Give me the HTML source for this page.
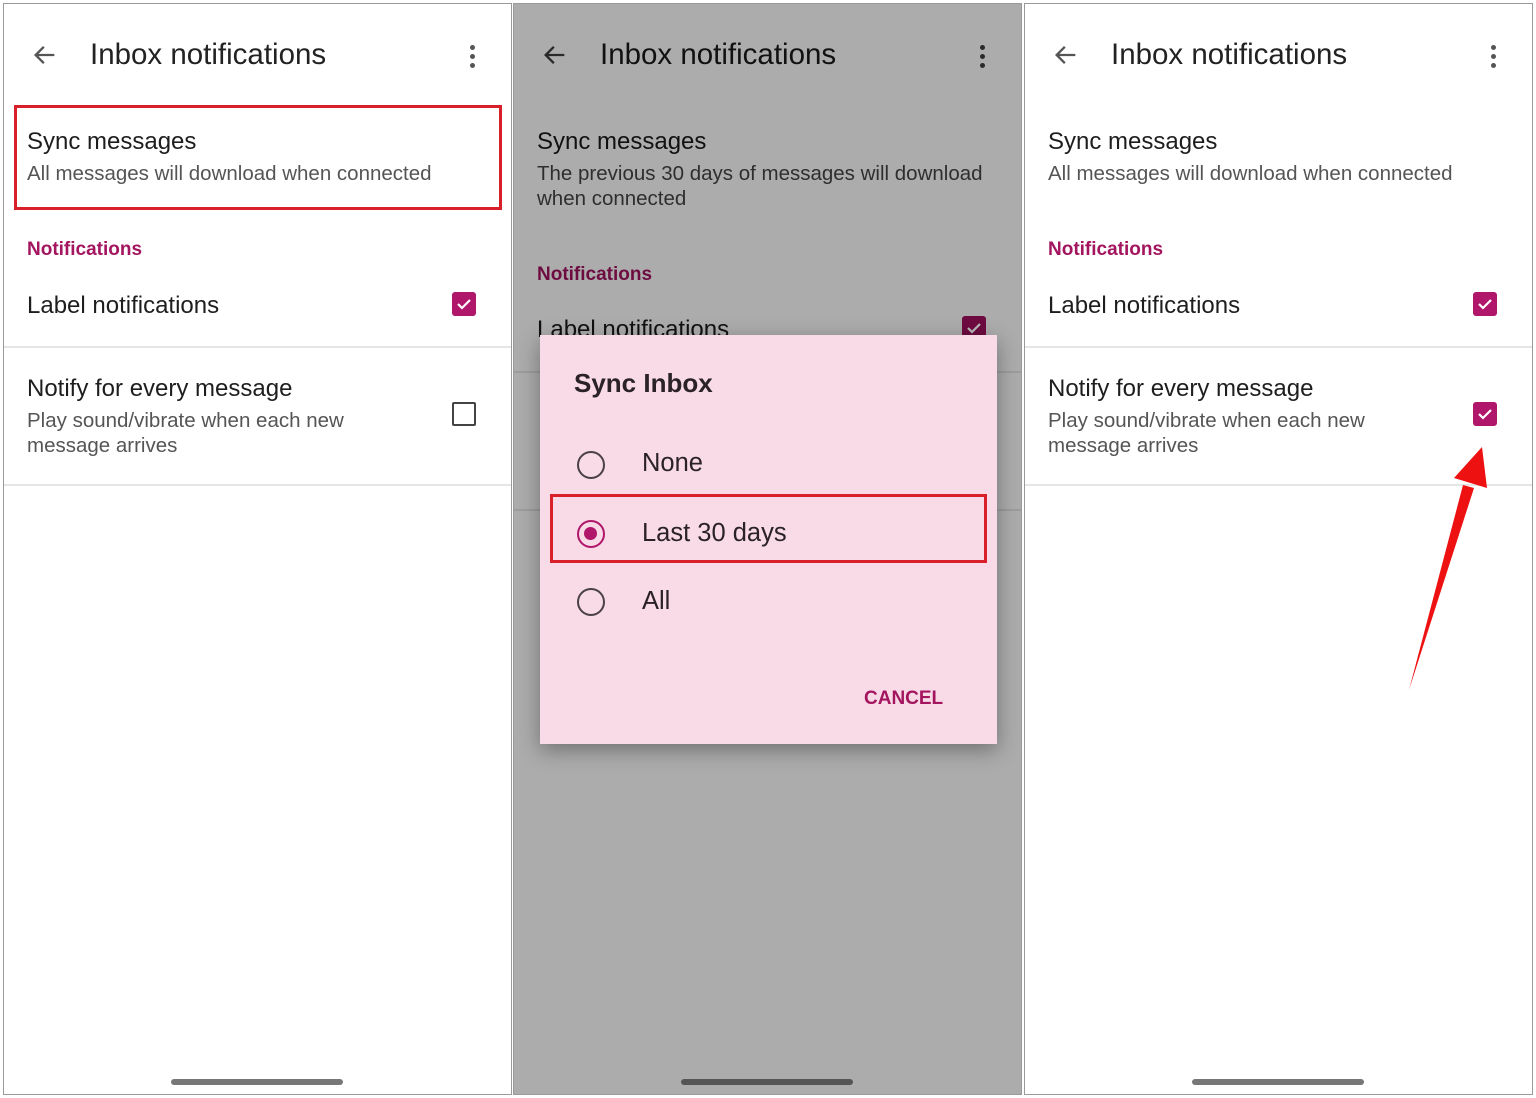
<!DOCTYPE html>
<html><head><meta charset="utf-8"><style>
*{margin:0;padding:0;box-sizing:border-box}
body{width:1536px;height:1098px;background:#fff;position:relative;overflow:hidden;font-family:"Liberation Sans",sans-serif;color:#1f1f1f}
.p{position:absolute;top:3px;height:1092px;width:509px;border:1px solid #9a9a9a;background:#fff;overflow:hidden}
.t{position:absolute;white-space:nowrap;line-height:1}
.h{font-size:29.5px;top:36px;left:86px;color:#222}
.s{font-size:24px;color:#1e1e1e}
.sub{font-size:20.5px;color:#555;line-height:25px}
.n{font-size:19px;font-weight:bold;color:#a3155f}
.div{position:absolute;left:0;right:0;height:2px;background:#e6e6e6}
.cb{position:absolute;width:24px;height:24px;border-radius:3px;background:#b0166a}
.cbo{position:absolute;width:24px;height:24px;border:2.5px solid #444;border-radius:2px}
.bar{position:absolute;top:1075px;left:167px;width:172px;height:6px;border-radius:3px;background:#777}
.dots{position:absolute;left:466px;top:41px;width:6px}
.dots i{display:block;width:5px;height:5px;border-radius:50%;background:#555;margin-bottom:4px}
</style></head><body>

<div class="p" style="left:3px">
<svg style="position:absolute;left:27px;top:37px" width="28" height="28" viewBox="0 0 24 24"><path d="M20 12H5M11 5l-7 7 7 7" stroke="#555" stroke-width="2" fill="none"/></svg>
<div class="t h">Inbox notifications</div>
<div class="dots"><i></i><i></i><i></i></div>
<div style="position:absolute;left:10px;top:101px;width:488px;height:105px;border:3px solid #d9202a"></div>
<div class="t s" style="left:23px;top:126px">Sync messages</div>
<div class="t sub" style="left:23px;top:157px">All messages will download when connected</div>
<div class="t n" style="left:23px;top:236px">Notifications</div>
<div class="t s" style="left:23px;top:290px">Label notifications</div>
<div class="cb" style="left:448px;top:288px"><svg width="24" height="24" viewBox="0 0 24 24"><path d="M6 12l4 4 8-8" stroke="#fff" stroke-width="2.2" fill="none"/></svg></div>
<div class="div" style="top:342px"></div>
<div class="t s" style="left:23px;top:373px">Notify for every message</div>
<div class="t sub" style="left:23px;top:404px">Play sound/vibrate when each new<br>message arrives</div>
<div class="cbo" style="left:448px;top:398px"></div>
<div class="div" style="top:480px"></div>
<div class="bar"></div>
</div>

<div class="p" style="left:513px;background:#acacac">
<svg style="position:absolute;left:27px;top:37px" width="28" height="28" viewBox="0 0 24 24"><path d="M20 12H5M11 5l-7 7 7 7" stroke="#2a2a2a" stroke-width="2" fill="none"/></svg>
<div class="t h" style="color:#111">Inbox notifications</div>
<div class="dots"><i style="background:#2a2a2a"></i><i style="background:#2a2a2a"></i><i style="background:#2a2a2a"></i></div>
<div class="t s" style="left:23px;top:126px;color:#111">Sync messages</div>
<div class="t sub" style="left:23px;top:157px;color:#2e2e2e">The previous 30 days of messages will download<br>when connected</div>
<div class="t n" style="left:23px;top:261px;color:#6d0c40">Notifications</div>
<div class="t s" style="left:23px;top:314px;color:#111">Label notifications</div>
<div class="cb" style="left:448px;top:312px;background:#6e0b41"><svg width="24" height="24" viewBox="0 0 24 24"><path d="M6 12l4 4 8-8" stroke="#bbb" stroke-width="2.2" fill="none"/></svg></div>
<div class="div" style="top:367px;background:#9c9c9c"></div>
<div class="div" style="top:505px;background:#9c9c9c"></div>
<div class="bar" style="background:#555"></div>
<div style="position:absolute;left:26px;top:331px;width:457px;height:409px;background:#f8dbe7;box-shadow:0 6px 20px rgba(0,0,0,.35)">
 <div class="t" style="left:34px;top:35px;font-size:26px;font-weight:bold;color:#2a2226">Sync Inbox</div>
 <div style="position:absolute;left:37px;top:116px;width:28px;height:28px;border-radius:50%;border:2.5px solid #4a4045"></div>
 <div class="t" style="left:102px;top:116px;font-size:25.5px;color:#2a2226">None</div>
 <div style="position:absolute;left:10px;top:159px;width:437px;height:69px;border:3px solid #d9202a"></div>
 <div style="position:absolute;left:37px;top:185px;width:28px;height:28px;border-radius:50%;border:2.5px solid #b0166a"><div style="position:absolute;left:5px;top:5px;width:13px;height:13px;border-radius:50%;background:#b0166a"></div></div>
 <div class="t" style="left:102px;top:186px;font-size:25.5px;color:#2a2226">Last 30 days</div>
 <div style="position:absolute;left:37px;top:253px;width:28px;height:28px;border-radius:50%;border:2.5px solid #4a4045"></div>
 <div class="t" style="left:102px;top:254px;font-size:25.5px;color:#2a2226">All</div>
 <div class="t" style="left:324px;top:354px;font-size:19px;font-weight:bold;color:#a3155f">CANCEL</div>
</div>
</div>

<div class="p" style="left:1024px">
<svg style="position:absolute;left:27px;top:37px" width="28" height="28" viewBox="0 0 24 24"><path d="M20 12H5M11 5l-7 7 7 7" stroke="#555" stroke-width="2" fill="none"/></svg>
<div class="t h">Inbox notifications</div>
<div class="dots"><i></i><i></i><i></i></div>
<div class="t s" style="left:23px;top:126px">Sync messages</div>
<div class="t sub" style="left:23px;top:157px">All messages will download when connected</div>
<div class="t n" style="left:23px;top:236px">Notifications</div>
<div class="t s" style="left:23px;top:290px">Label notifications</div>
<div class="cb" style="left:448px;top:288px"><svg width="24" height="24" viewBox="0 0 24 24"><path d="M6 12l4 4 8-8" stroke="#fff" stroke-width="2.2" fill="none"/></svg></div>
<div class="div" style="top:342px"></div>
<div class="t s" style="left:23px;top:373px">Notify for every message</div>
<div class="t sub" style="left:23px;top:404px">Play sound/vibrate when each new<br>message arrives</div>
<div class="cb" style="left:448px;top:398px"><svg width="24" height="24" viewBox="0 0 24 24"><path d="M6 12l4 4 8-8" stroke="#fff" stroke-width="2.2" fill="none"/></svg></div>
<div class="div" style="top:480px"></div>
<div class="bar"></div>
</div>

<svg style="position:absolute;left:0;top:0" width="1536" height="1098">
<path d="M1482 447 L1454 478 L1487 488 Z" fill="#ee1111"/>
<path d="M1409 690 L1463 485 L1474 488 Z" fill="#ee1111"/>
</svg>
</body></html>
